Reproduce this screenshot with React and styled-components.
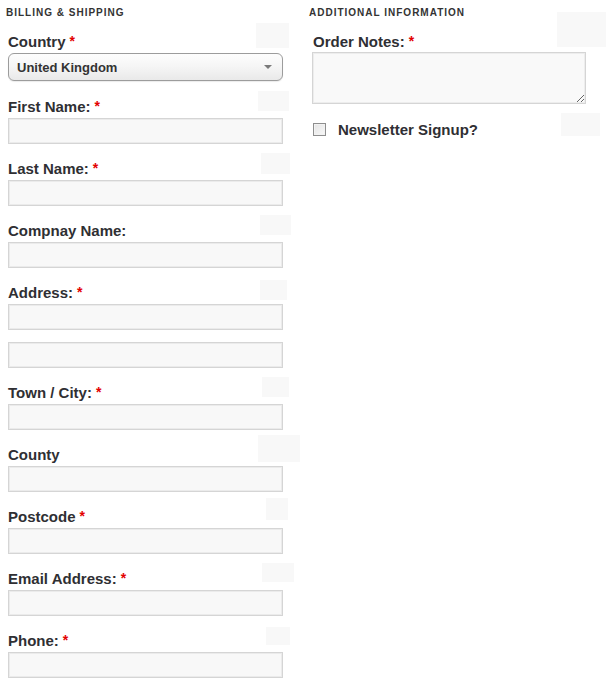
import React from "react";
import styled, { createGlobalStyle } from "styled-components";

const GlobalStyle = createGlobalStyle`
  html, body {
    margin: 0;
    padding: 0;
    background: #ffffff;
  }
  body {
    font-family: "Liberation Sans", Arial, sans-serif;
    color: #333333;
  }
`;

const Page = styled.div`
  width: 609px;
  height: 686px;
  display: grid;
  grid-template-columns: 303px 300px;
  padding: 7px 0 0 6px;
  box-sizing: border-box;
  overflow: hidden;
`;

const Column = styled.div`
  display: flex;
  flex-direction: column;
`;

const Heading = styled.h3`
  margin: 0 0 12px 0;
  font-size: 10px;
  line-height: 12px;
  font-weight: bold;
  letter-spacing: 1px;
  text-transform: uppercase;
  color: #333333;
`;

const Fields = styled.div`
  display: flex;
  flex-direction: column;
  padding-left: ${(p) => p.$indent || 2}px;
  width: 275px;
`;

const Field = styled.div`
  position: relative;
  display: flex;
  flex-direction: column;
  margin-bottom: ${(p) => (p.$last ? 0 : p.$gap || 14)}px;
`;

const Label = styled.label`
  display: block;
  font-size: 15px;
  line-height: 18px;
  font-weight: bold;
  color: #2f2f33;
  padding-top: 2px;
  margin-bottom: ${(p) => p.$gap || 2}px;
`;

const Req = styled.span`
  display: inline-block;
  margin-left: 4px;
  color: #e30000;
  font-size: 14px;
  line-height: 10px;
  vertical-align: top;
  position: relative;
  top: 3px;
`;

const Ghost = styled.span`
  position: absolute;
  left: ${(p) => p.$x}px;
  top: ${(p) => p.$y}px;
  width: ${(p) => p.$w}px;
  height: ${(p) => p.$h}px;
  background: #f8f8f8;
  pointer-events: none;
`;

const Input = styled.input`
  display: block;
  width: 275px;
  height: 26px;
  box-sizing: border-box;
  margin: 0;
  background: #f8f8f8;
  border: 1px solid #d5d5d5;
  box-shadow: inset 0 0 0 1px #ebebeb;
  border-radius: 0;
  outline: none;
  font-family: inherit;
  font-size: 13px;
  & + & {
    margin-top: 12px;
  }
`;

const SelectWrap = styled.div`
  position: relative;
  width: 275px;
  height: 28px;
`;

const Select = styled.select`
  appearance: none;
  -webkit-appearance: none;
  width: 100%;
  height: 100%;
  box-sizing: border-box;
  margin: 0;
  padding: 0 0 0 8px;
  border: 1px solid #9c9c9c;
  border-radius: 6px;
  background: linear-gradient(#fdfdfd 0%, #f6f6f6 45%, #e9e9e9 100%);
  box-shadow: 0 1px 1px rgba(0, 0, 0, 0.08);
  font-family: "Liberation Sans", Arial, sans-serif;
  font-size: 13px;
  font-weight: bold;
  color: #333333;
  outline: none;
`;

const Arrow = styled.span`
  position: absolute;
  right: 11px;
  top: 12px;
  width: 0;
  height: 0;
  border-left: 4px solid transparent;
  border-right: 4px solid transparent;
  border-top: 4px solid #7a7a7a;
  pointer-events: none;
`;

const Notes = styled.textarea`
  display: block;
  width: 274px;
  height: 52px;
  box-sizing: border-box;
  margin: 0 0 0 -1px;
  background: #f9f9f9;
  border: 1px solid #d5d5d5;
  box-shadow: inset 0 0 0 1px #ededed;
  border-radius: 0;
  outline: none;
  resize: both;
  font-family: inherit;
`;

const CheckRow = styled.label`
  position: relative;
  display: flex;
  align-items: center;
  height: 18px;
  margin-top: 16px;
  padding-left: 0;
  font-size: 15px;
  font-weight: bold;
  color: #2f2f33;
`;

const Box = styled.span`
  display: inline-block;
  width: 13px;
  height: 13px;
  box-sizing: border-box;
  border: 1px solid #8e8e8e;
  background: linear-gradient(135deg, #e4e4e4 0%, #f8f8f8 100%);
  box-shadow: inset 0 0 0 1px #f2f2f2;
  margin-right: 12px;
`;

const leftFields = [
  { label: "First Name:", req: true, ghost: [250, -5, 31, 20] },
  { label: "Last Name:", req: true, ghost: [253, -5, 29, 21] },
  { label: "Compnay Name:", req: false, ghost: [252, -5, 31, 20] },
  { label: "Address:", req: true, ghost: [252, -2, 27, 20], inputs: 2 },
  { label: "Town / City:", req: true, ghost: [254, -5, 27, 20] },
  { label: "County", req: false, ghost: [250, -9, 42, 27] },
  { label: "Postcode", req: true, ghost: [258, -8, 22, 22] },
  { label: "Email Address:", req: true, ghost: [254, -5, 32, 19] },
  { label: "Phone:", req: true, ghost: [258, -3, 24, 18] },
];

const App = () => {
  return (
    <>
      <GlobalStyle />
      <Page>
        <Column>
          <Heading>Billing &amp; Shipping</Heading>
          <Fields>
            <Field $gap={15}>
              <Ghost $x={248} $y={-8} $w={33} $h={25} />
              <Label $gap={2}>
                Country<Req>*</Req>
              </Label>
              <SelectWrap>
                <Select defaultValue="uk">
                  <option value="uk">United Kingdom</option>
                </Select>
                <Arrow />
              </SelectWrap>
            </Field>
            {leftFields.map((f, i) => (
              <Field key={f.label} $last={i === leftFields.length - 1}>
                <Ghost $x={f.ghost[0]} $y={f.ghost[1]} $w={f.ghost[2]} $h={f.ghost[3]} />
                <Label>
                  {f.label}
                  {f.req && <Req>*</Req>}
                </Label>
                <Input type="text" />
                {f.inputs === 2 && <Input type="text" />}
              </Field>
            ))}
          </Fields>
        </Column>
        <Column>
          <Heading>Additional Information</Heading>
          <Fields $indent={4}>
            <Field $last>
              <Ghost $x={244} $y={-19} $w={49} $h={35} />
              <Label $gap={1}>
                Order Notes:<Req>*</Req>
              </Label>
              <Notes />
            </Field>
            <CheckRow>
              <Ghost $x={248} $y={-7} $w={39} $h={23} />
              <Box />
              Newsletter Signup?
            </CheckRow>
          </Fields>
        </Column>
      </Page>
    </>
  );
};

export default App;
